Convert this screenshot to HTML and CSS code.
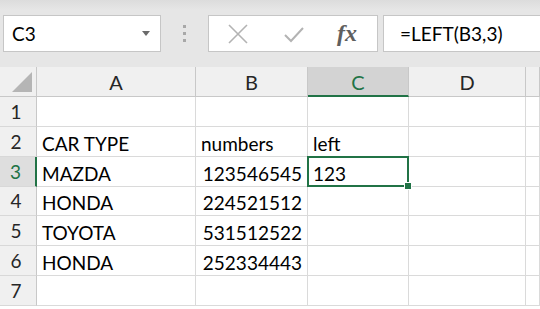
FILE: index.html
```html
<!DOCTYPE html>
<html lang="en">
<head>
  <meta charset="UTF-8">
  <title>Sheet - LEFT formula</title>
  <link rel="stylesheet" href="styles.css">
</head>
<body>

<!-- name box + formula bar -->
<div class="formula-bar">
  <div class="name-box">
    <span>C3</span>
    <svg class="drop" width="8" height="5" viewBox="0 0 8 5"><path d="M0 0h8L4 5z" fill="#6b6b6b"/></svg>
  </div>
  <div class="grip"><i></i><i></i><i></i></div>
  <div class="fx-buttons">
    <svg class="btn" width="22" height="22" viewBox="0 0 22 22"><path d="M2 2L20 20M20 2L2 20" stroke="#b3b3b3" stroke-width="1.6" fill="none"/></svg>
    <svg class="btn" width="22" height="22" viewBox="0 0 22 22"><path d="M2 12L8 18L20 5" stroke="#b3b3b3" stroke-width="2" fill="none"/></svg>
    <span class="fx">fx</span>
  </div>
  <div class="formula">=LEFT(B3,3)</div>
</div>

<!-- grid -->
<div class="sheet">
  <div class="hd corner"><span class="tri"></span></div>
  <div class="hd col">A</div>
  <div class="hd col">B</div>
  <div class="hd col sel">C</div>
  <div class="hd col">D</div>
  <div class="hd col"></div>

  <div class="hd row">1</div>
  <div class="cell"></div><div class="cell"></div><div class="cell"></div><div class="cell"></div><div class="cell"></div>

  <div class="hd row">2</div>
  <div class="cell">CAR TYPE</div><div class="cell">numbers</div><div class="cell">left</div><div class="cell"></div><div class="cell"></div>

  <div class="hd row sel">3</div>
  <div class="cell">MAZDA</div><div class="cell num">123546545</div><div class="cell active">123<span class="handle"></span></div><div class="cell"></div><div class="cell"></div>

  <div class="hd row">4</div>
  <div class="cell">HONDA</div><div class="cell num">224521512</div><div class="cell"></div><div class="cell"></div><div class="cell"></div>

  <div class="hd row">5</div>
  <div class="cell">TOYOTA</div><div class="cell num">531512522</div><div class="cell"></div><div class="cell"></div><div class="cell"></div>

  <div class="hd row">6</div>
  <div class="cell">HONDA</div><div class="cell num">252334443</div><div class="cell"></div><div class="cell"></div><div class="cell"></div>

  <div class="hd row">7</div>
  <div class="cell"></div><div class="cell"></div><div class="cell"></div><div class="cell"></div><div class="cell"></div>
</div>

</body>
</html>
```

FILE: styles.css
```css
body {
  margin: 0;
  font-family: Lato, 'Open Sans', sans-serif;
  background: #fff;
  color: #000;
  overflow: hidden;
  width: 540px;
  height: 309px;
}

.formula-bar {
  display: flex;
  align-items: center;
  height: 67px;
  background: linear-gradient(#dcdcdc, #e6e6e6 10px);
  padding-left: 3px;
  box-sizing: border-box;
}

.name-box {
  display: flex;
  align-items: center;
  justify-content: space-between;
  width: 158px;
  height: 37px;
  box-sizing: border-box;
  background: #fff;
  border: 1px solid #c6c6c6;
  padding: 0 10px 0 8px;
  font-size: 19px;
}

.grip {
  display: flex;
  flex-direction: column;
  gap: 4px;
  margin: 0 22px 0 22px;
}

.grip i {
  display: block;
  width: 3px;
  height: 3px;
  background: #a8a8a8;
}

.fx-buttons {
  display: flex;
  align-items: center;
  width: 170px;
  height: 37px;
  box-sizing: border-box;
  background: #fff;
  border: 1px solid #c6c6c6;
  padding-left: 18px;
  gap: 34px;
}

.fx {
  font-family: 'Liberation Serif', serif;
  font-style: italic;
  font-weight: bold;
  font-size: 24px;
  color: #5f5f5f;
  margin-left: -2px;
}

.formula {
  flex: 1;
  height: 37px;
  box-sizing: border-box;
  margin-left: 5px;
  background: #fff;
  border: 1px solid #c6c6c6;
  border-right: none;
  display: flex;
  align-items: center;
  padding-left: 16px;
  font-size: 19px;
}

.sheet {
  display: grid;
  grid-template-columns: 37px 159px 112px 101px 117px 1fr;
  grid-template-rows: 30px repeat(7, 29.85px);
}

.hd {
  background: #f0f0f0;
  color: #262626;
  box-sizing: border-box;
  border-right: 1px solid #c8c8c8;
  border-bottom: 1px solid #c8c8c8;
  display: flex;
  align-items: center;
  justify-content: center;
  font-size: 19px;
}

.hd.col {
  font-size: 20px;
  padding-top: 1px;
}

.hd.row {
  padding-right: 4px;
  border-bottom-color: #d8d8d8;
}

.hd.col.sel {
  background: #d3d3d3;
  color: #217346;
  border-bottom: 2px solid #217346;
}

.hd.row.sel {
  background: #dedede;
  color: #217346;
  border-right: 2px solid #217346;
}

.corner {
  justify-content: flex-end;
  align-items: flex-end;
  padding: 0 4px 4px 0;
}

.tri {
  width: 0;
  height: 0;
  border-left: 20px solid transparent;
  border-bottom: 20px solid #b5b5b5;
}

.cell {
  box-sizing: border-box;
  border-right: 1px solid #dadada;
  border-bottom: 1px solid #dadada;
  display: flex;
  align-items: flex-end;
  padding: 0 5px 3px 5px;
  font-size: 19px;
  line-height: 1;
  white-space: nowrap;
}

.cell.num {
  justify-content: flex-end;
}

.cell.active {
  position: relative;
}

.cell.active::after {
  content: '';
  position: absolute;
  left: -1px;
  top: -1px;
  right: -1px;
  bottom: -1px;
  border: 2px solid #217346;
}

.handle {
  position: absolute;
  right: -4px;
  bottom: -4px;
  width: 6px;
  height: 6px;
  background: #217346;
  border: 1px solid #fff;
  z-index: 2;
}
```
